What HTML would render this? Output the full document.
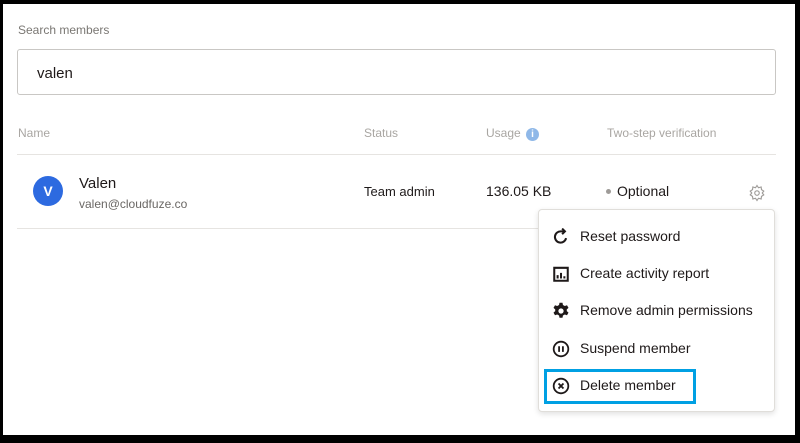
<!DOCTYPE html>
<html><head><style>
*{margin:0;padding:0;box-sizing:border-box}
html,body{width:800px;height:443px;overflow:hidden;background:#000}
#p{position:absolute;left:3px;top:4px;width:792px;height:431px;background:#fff;font-family:"Liberation Sans",sans-serif;color:#1e1919}
.a{position:absolute;white-space:nowrap}
.g{color:#a9a6a2;font-size:12px}
.mi{position:absolute;left:0;width:236px;height:30px;font-size:14px;color:#1e1919}
.mi span{position:absolute;left:41px;top:6px}
.mi svg{position:absolute;left:13px;top:6px}
</style></head><body><div id="p">
<div class="a" style="left:15px;top:19px;font-size:12px;color:#7a7773">Search members</div>
<div class="a" style="left:14px;top:45px;width:759px;height:46px;border:1px solid #c9c7c4;border-radius:3px"></div>
<div class="a" style="left:34px;top:61px;font-size:15px">valen</div>
<div class="a g" style="left:15px;top:122px">Name</div>
<div class="a g" style="left:361px;top:122px">Status</div>
<div class="a g" style="left:483px;top:122px">Usage</div>
<div class="a" style="left:523px;top:124px;width:13px;height:13px;border-radius:50%;background:#8fb8e8;color:#fff;font-size:10px;font-weight:bold;text-align:center;line-height:13px">i</div>
<div class="a g" style="left:604px;top:122px">Two-step verification</div>
<div class="a" style="left:14px;top:150px;width:759px;height:1px;background:#e6e4e1"></div>
<div class="a" style="left:30px;top:172px;width:30px;height:30px;border-radius:50%;background:#2d6ae0;color:#fff;font-weight:bold;font-size:14px;text-align:center;line-height:30px">V</div>
<div class="a" style="left:76px;top:171px;font-size:15px">Valen</div>
<div class="a" style="left:76px;top:193px;font-size:12px;color:#6a6764">valen@cloudfuze.co</div>
<div class="a" style="left:361px;top:180px;font-size:13px">Team admin</div>
<div class="a" style="left:483px;top:179px;font-size:14px">136.05 KB</div>
<div class="a" style="left:603px;top:185px;width:5px;height:5px;border-radius:50%;background:#9e9b98"></div>
<div class="a" style="left:614px;top:179px;font-size:14px">Optional</div>
<svg class="a" style="left:745px;top:180px" width="18" height="18" viewBox="0 0 24 24" fill="none" stroke="#9e9b98" stroke-width="1.5"><circle cx="12" cy="12" r="3"/><path d="M12 2l2 3 3.5-1 .5 3.5 3 2-2 2.5 2 2.5-3 2-.5 3.5-3.5-1-2 3-2-3-3.5 1-.5-3.5-3-2 2-2.5-2-2.5 3-2 .5-3.5 3.5 1z"/></svg>
<div class="a" style="left:14px;top:224px;width:522px;height:1px;background:#e6e4e1"></div>
<div class="a" style="left:535px;top:205px;width:237px;height:203px;background:#fff;border:1px solid #e0deda;border-radius:4px;box-shadow:0 2px 6px rgba(0,0,0,.12)">
<div class="mi" style="top:12px"><svg width="18" height="18" viewBox="0 0 16 16" fill="none" stroke="#1e1919" stroke-width="1.8"><path d="M12.5 9A5 5 0 1 1 8 3h3"/><path d="M9 0.5L11.5 3 9 5.5" stroke-width="1.8"/></svg><span>Reset password</span></div>
<div class="mi" style="top:49px"><svg width="18" height="18" viewBox="0 0 16 16" fill="none" stroke="#1e1919" stroke-width="1.8"><path d="M2 14V2.5h12V14H2z"/><path d="M5 12V9M8 12V7M11 12v-2"/></svg><span>Create activity report</span></div>
<div class="mi" style="top:86px"><svg width="18" height="18" viewBox="0 0 24 24" fill="#1e1919"><path d="M10 1h4l.6 3 2.5 1.4 2.9-1 2 3.4-2.3 2v2.4l2.3 2-2 3.4-2.9-1-2.5 1.4-.6 3h-4l-.6-3-2.5-1.4-2.9 1-2-3.4 2.3-2v-2.4l-2.3-2 2-3.4 2.9 1L9.4 4z"/><circle cx="12" cy="12" r="3.5" fill="#fff"/></svg><span>Remove admin permissions</span></div>
<div class="mi" style="top:124px"><svg width="18" height="18" viewBox="0 0 16 16" fill="none" stroke="#1e1919" stroke-width="1.6"><circle cx="8" cy="8" r="6.5"/><path d="M6.3 5.5v5M9.7 5.5v5"/></svg><span>Suspend member</span></div>
<div class="mi" style="top:161px"><svg width="18" height="18" viewBox="0 0 16 16" fill="none" stroke="#1e1919" stroke-width="1.6"><circle cx="8" cy="8" r="6.5"/><path d="M5.8 5.8l4.4 4.4M10.2 5.8l-4.4 4.4"/></svg><span>Delete member</span></div>
</div>
<div class="a" style="left:541px;top:365px;width:152px;height:35px;border:3px solid #00a0e3"></div>
</div></body></html>
